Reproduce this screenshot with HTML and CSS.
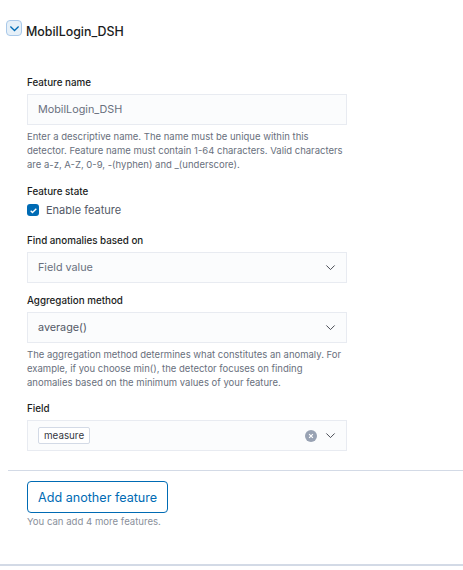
FILE: index.html
```html
<!DOCTYPE html>
<html>
<head>
<meta charset="utf-8">
<link rel="stylesheet" href="styles.css">
</head>
<body>
<div class="panel">
  <div class="header">
    <span class="toggle">
      <svg width="11" height="11" viewBox="0 0 16 16"><path d="M2 5l6 6 6-6" fill="none" stroke="#006bb4" stroke-width="1.8"/></svg>
    </span>
    <span class="title">MobilLogin_DSH</span>
  </div>
  <div class="form">
    <div class="row">
      <label class="label">Feature name</label>
      <div class="input"><span class="value">MobilLogin_DSH</span></div>
      <p class="help">Enter a descriptive name. The name must be unique within this detector. Feature name must contain 1-64 characters. Valid characters are a-z, A-Z, 0-9, -(hyphen) and _(underscore).</p>
    </div>
    <div class="row row-check">
      <label class="label">Feature state</label>
      <div class="check">
        <span class="box"><svg width="9" height="9" viewBox="0 0 16 16"><path d="M3 8.5l3.2 3.2L13 4.8" fill="none" stroke="#fff" stroke-width="2.4"/></svg></span>
        <span class="check-text">Enable feature</span>
      </div>
    </div>
    <div class="row">
      <label class="label">Find anomalies based on</label>
      <div class="input select"><span class="value">Field value</span>
        <svg class="chev" width="11" height="11" viewBox="0 0 16 16"><path d="M2 5l6 6 6-6" fill="none" stroke="#343741" stroke-width="1.3"/></svg>
      </div>
    </div>
    <div class="row">
      <label class="label">Aggregation method</label>
      <div class="input select"><span class="value dark">average()</span>
        <svg class="chev" width="11" height="11" viewBox="0 0 16 16"><path d="M2 5l6 6 6-6" fill="none" stroke="#343741" stroke-width="1.3"/></svg>
      </div>
      <p class="help help-agg">The aggregation method determines what constitutes an anomaly. For example, if you choose min(), the detector focuses on finding anomalies based on the minimum values of your feature.</p>
    </div>
    <div class="row row-last">
      <label class="label">Field</label>
      <div class="input combo">
        <span class="pill">measure</span>
        <span class="spacer"></span>
        <span class="clear"><svg width="6" height="6" viewBox="0 0 8 8"><path d="M1.5 1.5l5 5M6.5 1.5l-5 5" stroke="#fff" stroke-width="1.6"/></svg></span>
        <svg class="chev" width="11" height="11" viewBox="0 0 16 16"><path d="M2 5l6 6 6-6" fill="none" stroke="#343741" stroke-width="1.3"/></svg>
      </div>
    </div>
  </div>
  <hr class="rule">
  <div class="footer">
    <button class="add">Add another feature</button>
    <p class="note">You can add 4 more features.</p>
  </div>
</div>
</body>
</html>
```
FILE: styles.css
```css
html, body {
  margin: 0;
  padding: 0;
  background: #fff;
  font-family: Inter, "Noto Sans", sans-serif;
  color: #343741;
}
.panel {
  width: 463px;
  height: 564px;
  border-bottom: 2px solid #d3dae6;
}
.header {
  display: flex;
  align-items: center;
  gap: 4px;
  padding: 20px 0 0 6px;
  height: 16px;
}
.toggle {
  width: 14px;
  height: 14px;
  border: 1px solid #a9c9ea;
  border-radius: 4px;
  background: #e6f0f8;
  display: flex;
  align-items: center;
  justify-content: center;
}
.title {
  font-size: 12.4px;
  font-weight: 500;
  color: #1a1c21;
  margin-top: 6px;
}
.form {
  padding: 40px 0 0 27px;
  width: 320px;
}
.row {
  margin-bottom: 11px;
}
.row-check {
  margin-bottom: 17px;
}
.row-last {
  margin-bottom: 0;
}
.label {
  display: block;
  font-size: 9.8px;
  font-weight: 500;
  color: #1a1c21;
  line-height: 14px;
  margin-bottom: 4px;
}
.input {
  height: 31px;
  box-sizing: border-box;
  border: 1px solid #e8ebf1;
  background: #fbfcfd;
  display: flex;
  align-items: center;
  padding: 0 10px;
}
.value {
  font-size: 10.8px;
  color: #69707d;
}
.value.dark {
  color: #535966;
}
.select {
  justify-content: space-between;
}
.help {
  margin: 5px 0 13px;
  font-size: 9.5px;
  line-height: 14px;
  color: #69707d;
}
.help-agg {
  margin-bottom: 12px;
}
.check {
  display: flex;
  align-items: center;
  gap: 7px;
  margin-top: 4px;
}
.box {
  width: 12px;
  height: 12px;
  border-radius: 3px;
  background: #006bb4;
  display: flex;
  align-items: center;
  justify-content: center;
}
.check-text {
  font-size: 11px;
  color: #535966;
}
.combo {
  gap: 8px;
}
.pill {
  font-size: 9.8px;
  color: #343741;
  border: 1px solid #d3dae6;
  background: #fff;
  border-radius: 2px;
  padding: 1px 5px;
  line-height: 13px;
}
.spacer {
  flex: 1;
}
.clear {
  width: 12px;
  height: 12px;
  border-radius: 50%;
  background: #98a2b3;
  display: flex;
  align-items: center;
  justify-content: center;
}
.rule {
  border: none;
  border-top: 1px solid #d3dae6;
  margin: 19px 0 0 8px;
}
.footer {
  padding: 10px 0 0 27px;
}
.add {
  font-family: Inter, "Noto Sans", sans-serif;
  font-size: 12.6px;
  color: #006bb4;
  background: #fff;
  border: 1px solid #006bb4;
  border-radius: 4px;
  height: 32px;
  padding: 0 10px;
}
.note {
  margin: 3px 0 0;
  font-size: 9.6px;
  color: #8a909b;
}
```
